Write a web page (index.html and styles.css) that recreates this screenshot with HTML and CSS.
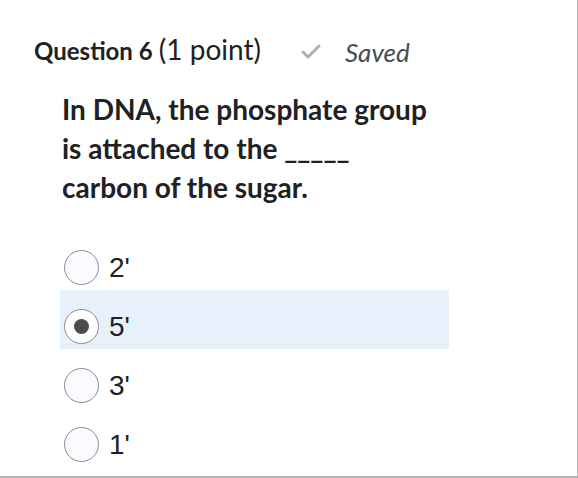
FILE: index.html
```html
<!DOCTYPE html>
<html>
<head>
<meta charset="utf-8">
<link rel="stylesheet" href="styles.css">
</head>
<body>
<div class="frame">
  <div class="header">
    <h2 class="title"><span class="qnum">Question 6</span> <span class="pts">(1 point)</span></h2>
    <div class="saved">
      <svg class="check" width="20" height="15" viewBox="0 0 20 15"><path d="M2 8 L7 13 L18 2" fill="none" stroke="#a9b0b6" stroke-width="3" stroke-linecap="round" stroke-linejoin="round"/></svg>
      <span>Saved</span>
    </div>
  </div>
  <p class="question">In DNA, the phosphate group is attached to the _____ carbon of the sugar.</p>
  <div class="options">
    <label class="opt"><span class="radio"></span><span class="lbl">2'</span></label>
    <label class="opt selected"><span class="radio checked"></span><span class="lbl">5'</span></label>
    <label class="opt"><span class="radio"></span><span class="lbl">3'</span></label>
    <label class="opt"><span class="radio"></span><span class="lbl">1'</span></label>
  </div>
</div>
</body>
</html>
```
FILE: styles.css
```css
html, body { margin: 0; padding: 0; background: #fff; }
.frame {
  box-sizing: border-box;
  width: 578px;
  height: 478px;
  border-right: 1px solid #b3b3b3;
  border-bottom: 2px solid #b3b3b3;
  padding: 32px 0 0 34px;
  font-family: Lato, "Noto Sans", sans-serif;
  color: #202122;
}
.header { display: flex; align-items: center; gap: 40px; height: 36px; }
.title { margin: 0; font-size: 24px; font-weight: 400; color: #202122; white-space: nowrap; line-height: 36px; }
.qnum { font-weight: 700; }
.pts { font-size: 28px; }
.saved { display: flex; align-items: center; gap: 24px; color: #494c4e; font-style: italic; font-size: 26px; padding-top: 3px; }
.check { display: block; }
.question {
  margin: 22px 0 0 28px;
  width: 372px;
  font-size: 28px;
  font-weight: 700;
  line-height: 39px;
}
.options { margin: 24px 0 0 26px; width: 389px; }
.opt { box-sizing: border-box; display: flex; align-items: center; height: 59px; padding: 19px 0 5px 4px; }
.opt.selected { background: #e6f1fb; }
.radio {
  box-sizing: border-box;
  width: 35px; height: 35px;
  border-radius: 50%;
  border: 1.5px solid #8a8c8e;
  background: #f9fbff;
  display: flex; align-items: center; justify-content: center;
  flex: none;
}
.radio.checked { background: #fff; }
.radio.checked::after { content: ""; width: 15px; height: 15px; border-radius: 50%; background: #494c4e; }
.lbl { margin-left: 10px; font-family: "Liberation Sans", Arial, sans-serif; font-size: 28px; line-height: 30px; color: #202122; }
```
